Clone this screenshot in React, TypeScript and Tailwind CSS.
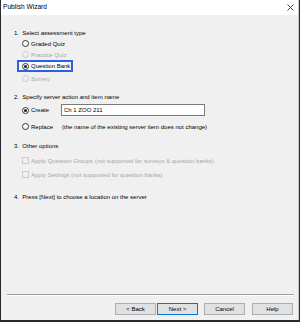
import React from "react";

const Radio = ({ checked = false, disabled = false }: { checked?: boolean; disabled?: boolean }) => (
  <span
    className={
      disabled
        ? "flex h-[7px] w-[7px] shrink-0 items-center justify-center rounded-full border border-[#cccccc] bg-[#f0f0f0]"
        : "flex h-[7px] w-[7px] shrink-0 items-center justify-center rounded-full border border-[#333333] bg-white"
    }
  >
    {checked && <span className="h-[3px] w-[3px] rounded-full bg-[#1a1a1a]" />}
  </span>
);

const Check = () => (
  <span className="h-[7px] w-[7px] shrink-0 border border-[#cccccc] bg-[#f0f0f0]" />
);

const Btn = ({ label, primary = false, cls = "" }: { label: string; primary?: boolean; cls?: string }) => (
  <div
    className={
      (primary
        ? "border-[#0078d7] "
        : "border-[#adadad] ") +
      "flex h-[12px] w-[41px] items-center justify-center border bg-[#e1e1e1] text-[6px] leading-none text-black " +
      cls
    }
  >
    {label}
  </div>
);

export default function App() {
  return (
    <div className="h-[322px] w-[300px] border-b-[2px] border-l border-r border-[#2a2a2a] bg-[#f0f0f0] font-['Liberation_Sans',Arial,sans-serif]">
      <div className="flex h-full flex-col border-r border-[#c8c8c8]">
        {/* title bar */}
        <div className="flex h-[15px] shrink-0 items-center justify-between bg-white pl-[2px] pr-[3px]">
          <span className="text-[6.6px] leading-none text-black">Publish Wizard</span>
          <svg width="7" height="7" viewBox="0 0 7 7" className="mr-[1px]">
            <path d="M0.5 0.5 L6.5 6.5 M6.5 0.5 L0.5 6.5" stroke="#333" strokeWidth="0.9" fill="none" />
          </svg>
        </div>

        {/* body */}
        <div className="flex flex-1 flex-col pl-[13px] text-[6px] leading-none text-black">
          <div className="mt-[12px] flex h-[11px] items-center">1.&nbsp; Select assessment type</div>

          <div className="flex h-[11px] items-center gap-[2px] pl-[8px]">
            <Radio />
            <span>Graded Quiz</span>
          </div>
          <div className="flex h-[11px] items-center gap-[2px] pl-[8px] text-[#a6a6a6]">
            <Radio disabled />
            <span>Practice Quiz</span>
          </div>
          <div className="ml-[3px] flex h-[12px] w-[56px] items-center gap-[2px] border-2 border-[#2f5fe8] bg-[#fafafa] pl-[3px]">
            <Radio checked />
            <span>Question Bank</span>
          </div>
          <div className="mt-[1px] flex h-[11px] items-center gap-[2px] pl-[8px] text-[#a6a6a6]">
            <Radio disabled />
            <span>Survey</span>
          </div>

          <div className="mt-[7px] flex h-[11px] items-center">2.&nbsp; Specify server action and item name</div>

          <div className="mt-[2px] flex h-[12px] items-center pl-[8px]">
            <div className="flex w-[39px] items-center gap-[2px]">
              <Radio checked />
              <span>Create</span>
            </div>
            <div className="flex h-[12px] w-[144px] items-center border border-[#7a7a7a] bg-white pl-[2px]">
              Ch 1 ZOO 211
            </div>
          </div>
          <div className="mt-[5px] flex h-[11px] items-center pl-[8px]">
            <div className="flex w-[40px] items-center gap-[2px]">
              <Radio />
              <span>Replace</span>
            </div>
            <span>(the name of the existing server item does not change)</span>
          </div>

          <div className="mt-[8px] flex h-[11px] items-center">3.&nbsp; Other options</div>

          <div className="mt-[4px] flex h-[11px] items-center gap-[2px] pl-[8px] text-[#a6a6a6]">
            <Check />
            <span>Apply Question Groups (not supported for surveys &amp; question banks)</span>
          </div>
          <div className="mt-[3px] flex h-[11px] items-center gap-[2px] pl-[8px] text-[#a6a6a6]">
            <Check />
            <span>Apply Settings (not supported for question banks)</span>
          </div>

          <div className="mt-[11px] flex h-[11px] items-center">4.&nbsp; Press [Next] to choose a location on the server</div>

          <div className="flex-1" />
        </div>

        {/* footer */}
        <div className="ml-[6px] mr-[4px] h-[2px] shrink-0 border-b border-t border-b-white border-t-[#a0a0a0]" />
        <div className="mt-[7px] mb-[5px] flex shrink-0 justify-end pr-[5px]">
          <Btn label="< Back" />
          <Btn label="Next >" primary cls="ml-[1px]" />
          <Btn label="Cancel" cls="ml-[6px]" />
          <Btn label="Help" cls="ml-[7px]" />
        </div>
      </div>
    </div>
  );
}
